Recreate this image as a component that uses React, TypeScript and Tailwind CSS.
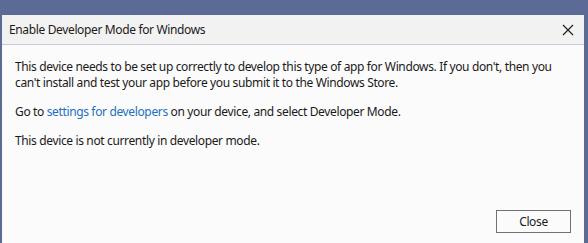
export default function App() {
  return (
    <div className="h-[243px] w-[588px] bg-[#5c6b96] pt-[15px] pl-[2px] pr-[4px] overflow-hidden font-['Noto_Sans',sans-serif] tracking-[-0.36px]">
      <div className="flex h-[228px] flex-col bg-[#fbfbfb]">
        <div className="flex h-[30px] items-center justify-between border-b border-[#c9cad9] bg-[#f2f2f2] pl-[7px] pr-[8px]">
          <span className="text-[12px] text-[#1a1a1a]">Enable Developer Mode for Windows</span>
          <svg width="12" height="12" viewBox="0 0 12 12" className="mr-[2px]">
            <path d="M1 1 L11 11 M11 1 L1 11" stroke="#1a1a1a" strokeWidth="1.1" />
          </svg>
        </div>
        <div className="flex flex-1 flex-col px-[13px] pt-[14px] text-[12px] leading-[16px] text-[#1a1a1a]">
          <p className="whitespace-nowrap">
            This device needs to be set up correctly to develop this type of app for Windows. If you don't, then you
            <br />
            can't install and test your app before you submit it to the Windows Store.
          </p>
          <p className="mt-[13px]">
            Go to <span className="text-[#1e6fbf]">settings for developers</span> on your device, and select Developer Mode.
          </p>
          <p className="mt-[13px]">This device is not currently in developer mode.</p>
          <div className="mt-auto mb-[10px] flex justify-end">
            <button className="h-[23px] w-[75px] border border-[#707070] bg-[#fbfbfb] text-[12px] text-[#1a1a1a]">
              Close
            </button>
          </div>
        </div>
      </div>
    </div>
  );
}
